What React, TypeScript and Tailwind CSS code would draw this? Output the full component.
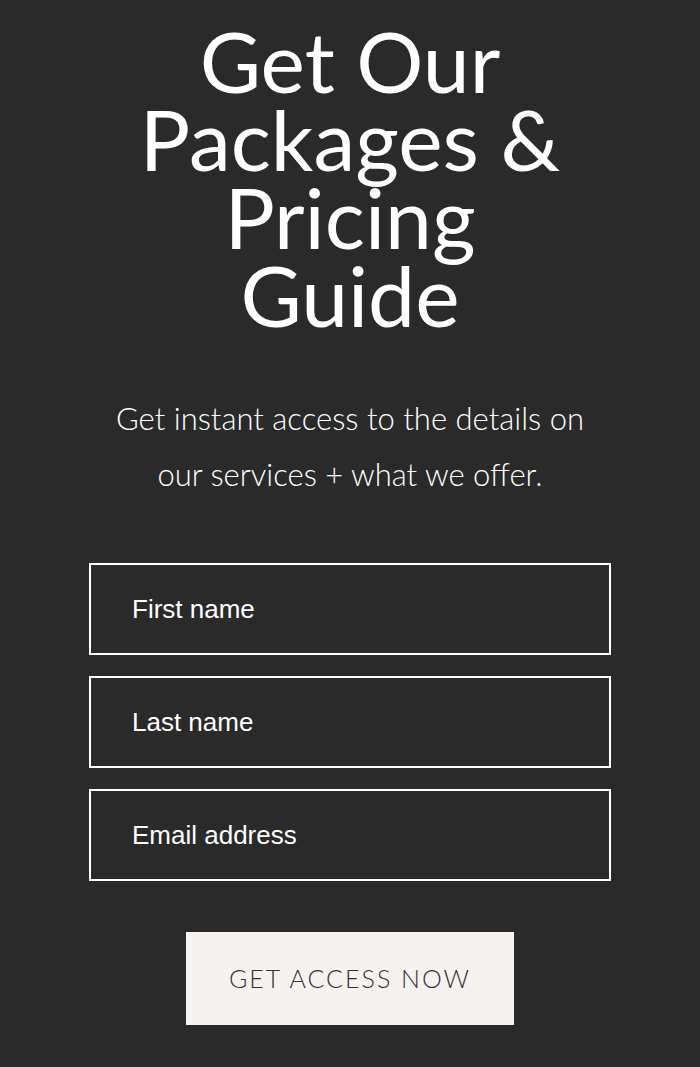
export default function App() {
  return (
    <div className="min-h-[1067px] w-full bg-[#2a2a2a] flex flex-col items-center">
      {/* Heading */}
      <h1 className="mt-[22px] text-center text-white font-['Lato',sans-serif] font-normal text-[84px] leading-[78px] w-[470px]">
        Get Our Packages &amp; Pricing Guide
      </h1>

      {/* Subtitle */}
      <p className="mt-[56px] text-center text-white font-['Lato',sans-serif] font-light text-[31px] leading-[56px] w-[520px]">
        Get instant access to the details on our services + what we offer.
      </p>

      {/* Form */}
      <form className="mt-[61px] w-[522px] flex flex-col gap-[21px]">
        {["First name", "Last name", "Email address"].map((label) => (
          <input
            key={label}
            type="text"
            placeholder={label}
            className="h-[92px] w-full border-2 border-white bg-transparent px-[41px] text-[26px] text-white placeholder:text-white font-['Liberation_Sans',Arial,sans-serif] outline-none"
          />
        ))}
      </form>

      <button className="mt-[51px] h-[93px] w-[328px] bg-[#f5f2f0] text-[#333] text-[25px] tracking-[2px] font-['Lato',sans-serif] font-light">
        GET ACCESS NOW
      </button>
    </div>
  )
}
